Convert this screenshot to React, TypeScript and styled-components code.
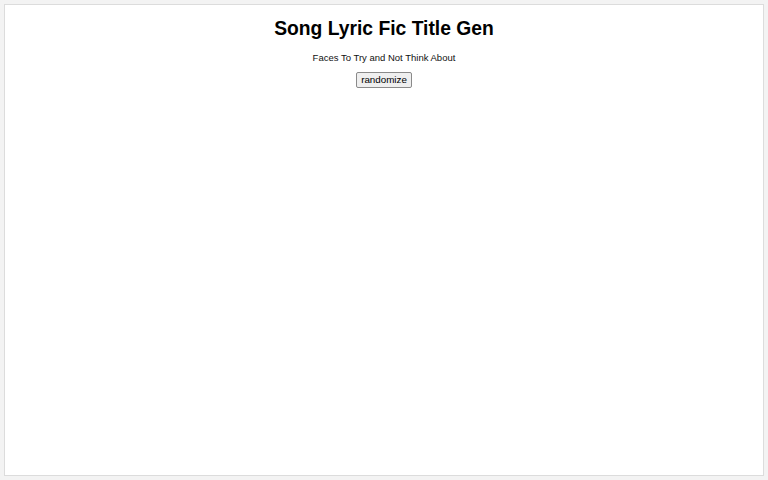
import React from "react";
import styled, { createGlobalStyle } from "styled-components";

const Global = createGlobalStyle`
  html, body { margin: 0; padding: 0; background: #f3f3f3; }
  body { font-family: "Liberation Sans", Arial, sans-serif; }
`;

const Page = styled.div`
  box-sizing: border-box;
  margin: 4px;
  height: 472px;
  background: #ffffff;
  border: 1px solid #dcdcdc;
  display: flex;
  flex-direction: column;
  align-items: center;
  padding-top: 12px;
`;

const Title = styled.h1`
  margin: 0;
  font-size: 19.3px;
  font-weight: bold;
  color: #000;
  line-height: 24px;
`;

const Lyric = styled.p`
  margin: 11px 0 0;
  font-size: 9.5px;
  line-height: 12px;
  color: #111;
`;

const Button = styled.button`
  box-sizing: border-box;
  margin-top: 8px;
  height: 16px;
  font-family: "Liberation Sans", Arial, sans-serif;
  font-size: 9.8px;
  line-height: 12px;
  padding: 0 4px;
  color: #000;
  background: #efefef;
  border: 1px solid #8a8a8a;
  border-radius: 2px;
`;

export default function App() {
  return (
    <>
      <Global />
      <Page>
        <Title>Song Lyric Fic Title Gen</Title>
        <Lyric>Faces To Try and Not Think About</Lyric>
        <Button>randomize</Button>
      </Page>
    </>
  );
}
